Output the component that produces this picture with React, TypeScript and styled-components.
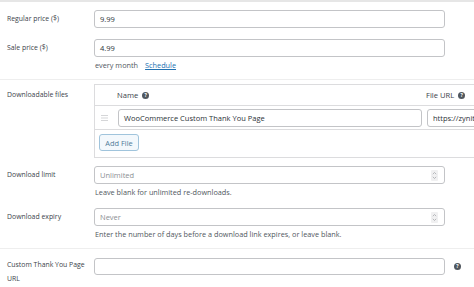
import { FunctionComponent, ReactNode } from "react";
import styled, { createGlobalStyle } from "styled-components";

const GlobalStyle = createGlobalStyle`
    html, body {
        margin: 0;
        padding: 0;
        background: #fff;
        overflow: hidden;
    }
    body {
        font-family: "Open Sans", "Noto Sans", sans-serif;
        color: #3c434a;
    }
`;

const Panel = styled.div`
    width: 474px;
    height: 287px;
    border-top: 2px solid #e6e6e6;
    box-sizing: border-box;
    overflow: hidden;
`;

const Group = styled.div<{ $pad: string; $line?: boolean }>`
    padding: ${({ $pad }) => $pad};
    border-bottom: ${({ $line }) => ($line ? "1px solid #eee" : "none")};
    display: flex;
    flex-direction: column;
`;

const Field = styled.div<{ $gap?: number }>`
    display: flex;
    align-items: flex-start;
    margin-bottom: ${({ $gap }) => $gap ?? 0}px;
`;

const Label = styled.label<{ $top?: number }>`
    width: 94px;
    flex: none;
    box-sizing: border-box;
    padding-left: 7px;
    padding-top: ${({ $top }) => $top ?? 2}px;
    font-size: 6.9px;
    line-height: 14px;
    color: #3c434a;
    white-space: nowrap;
`;

const Body = styled.div`
    display: flex;
    flex-direction: column;
`;

const Line = styled.div`
    display: flex;
    align-items: center;
    gap: 9px;
`;

const Input = styled.div<{ $w?: number; $h?: number; $placeholder?: boolean }>`
    width: ${({ $w }) => $w ?? 351}px;
    height: ${({ $h }) => $h ?? 18}px;
    box-sizing: border-box;
    border: 1px solid #c3c4c7;
    border-radius: 3px;
    background: #fff;
    display: flex;
    align-items: center;
    padding: 0 5px;
    font-size: 7.5px;
    color: ${({ $placeholder }) => ($placeholder ? "#8c8f94" : "#2c3338")};
    white-space: nowrap;
    overflow: hidden;
    flex: none;
`;

const Spinner = styled.svg`
    margin-left: auto;
    margin-right: 1px;
    flex: none;
`;

const Help = styled.p`
    margin: 0;
    padding-left: 1px;
    font-size: 7.3px;
    line-height: 9px;
    color: #50575e;
    margin-top: 4px;
    white-space: nowrap;
`;

const Link = styled.a`
    color: #2271b1;
    text-decoration: underline;
    margin-left: 7px;
`;

const Tip = styled.span`
    width: 7px;
    height: 7px;
    border-radius: 50%;
    background: #50575e;
    color: #fff;
    font-size: 5px;
    font-weight: 700;
    line-height: 7px;
    text-align: center;
    display: inline-block;
    flex: none;
`;

const Table = styled.div`
    width: 420px;
    border: 1px solid #dcdcde;
    margin-top: 4px;
    box-sizing: border-box;
`;

const Head = styled.div`
    display: flex;
    align-items: center;
    height: 20px;
    border-bottom: 1px solid #dcdcde;
    font-size: 7.6px;
    color: #3c434a;
`;

const HeadCell = styled.div<{ $w: number }>`
    width: ${({ $w }) => $w}px;
    flex: none;
    display: flex;
    align-items: center;
    gap: 4px;
`;

const FileRow = styled.div`
    display: flex;
    align-items: center;
    height: 23px;
    border-bottom: 1px solid #dcdcde;
    gap: 5px;
`;

const Handle = styled.div`
    width: 17px;
    flex: none;
    display: flex;
    justify-content: center;
    padding-left: 1px;
`;

const Foot = styled.div`
    display: flex;
    padding: 4px 4px 6px;
`;

const Button = styled.button`
    height: 17px;
    width: 40px;
    padding: 0;
    border: 1px solid #a0c4dc;
    border-radius: 3px;
    background: #f3f8fc;
    color: #4f7a99;
    font-family: inherit;
    font-size: 7.4px;
`;

const Arrows: FunctionComponent = () => (
    <Spinner width="7" height="11" viewBox="0 0 7 11">
        <rect width="7" height="11" rx="1" fill="#f0f0f1" />
        <path d="M1.8 4.2 L3.5 2.5 L5.2 4.2 M1.8 6.8 L3.5 8.5 L5.2 6.8" stroke="#a7aaad" strokeWidth="0.8" fill="none" />
    </Spinner>
);

const Grip: FunctionComponent = () => (
    <svg width="7" height="6" viewBox="0 0 7 6">
        <path d="M0 0.5 H7 M0 3 H7 M0 5.5 H7" stroke="#c3c4c7" strokeWidth="0.7" />
    </svg>
);

const Row: FunctionComponent<{ label: ReactNode; top?: number; gap?: number; children: ReactNode }> = ({ label, top, gap, children }) => (
    <Field $gap={gap}>
        <Label $top={top}>{label}</Label>
        <Body>{children}</Body>
    </Field>
);

const App: FunctionComponent = () => {
    return (
        <Panel>
            <GlobalStyle />
            <Group $pad="8px 0 9px" $line>
                <Row label="Regular price ($)" gap={11}>
                    <Input>9.99</Input>
                </Row>
                <Row label="Sale price ($)">
                    <Input>4.99</Input>
                    <Help>
                        every month<Link href="#">Schedule</Link>
                    </Help>
                </Row>
            </Group>
            <Group $pad="0 0 9px" $line>
                <Row label="Downloadable files" top={8} gap={8}>
                    <Table>
                        <Head>
                            <HeadCell $w={22} />
                            <HeadCell $w={309}>
                                Name <Tip>?</Tip>
                            </HeadCell>
                            <HeadCell $w={80}>
                                File URL <Tip>?</Tip>
                            </HeadCell>
                        </Head>
                        <FileRow>
                            <Handle>
                                <Grip />
                            </Handle>
                            <Input $w={304}>WooCommerce Custom Thank You Page</Input>
                            <Input $w={80}>https://zynith.com/thank-you</Input>
                        </FileRow>
                        <Foot>
                            <Button>Add File</Button>
                        </Foot>
                    </Table>
                </Row>
                <Row label="Download limit" gap={11}>
                    <Input $placeholder>
                        Unlimited
                        <Arrows />
                    </Input>
                    <Help>Leave blank for unlimited re-downloads.</Help>
                </Row>
                <Row label="Download expiry">
                    <Input $placeholder>
                        Never
                        <Arrows />
                    </Input>
                    <Help>Enter the number of days before a download link expires, or leave blank.</Help>
                </Row>
            </Group>
            <Group $pad="9px 0">
                <Row
                    label={
                        <>
                            Custom Thank You Page
                            <br />
                            URL
                        </>
                    }
                    top={0}
                >
                    <Line>
                        <Input $h={17} />
                        <Tip>?</Tip>
                    </Line>
                </Row>
            </Group>
        </Panel>
    );
};

export default App;
